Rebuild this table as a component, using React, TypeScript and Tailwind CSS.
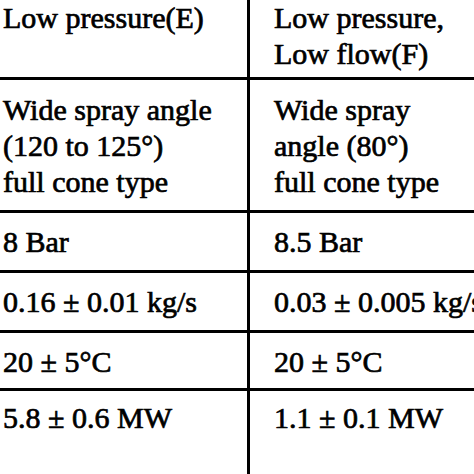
import React from "react"

type Row = {
  left: string[]
  right: string[]
  h: string
  pt: string
}

const rows: Row[] = [
  { left: ["Low pressure(E)"], right: ["Low pressure,", "Low flow(F)"], h: "h-[80px]", pt: "pt-0" },
  {
    left: ["Wide spray angle", "(120 to 125°)", "full cone type"],
    right: ["Wide spray", "angle (80°)", "full cone type"],
    h: "h-[133px]",
    pt: "pt-[12px]",
  },
  { left: ["8 Bar"], right: ["8.5 Bar"], h: "h-[60px]", pt: "pt-[11px]" },
  { left: ["0.16 ± 0.01 kg/s"], right: ["0.03 ± 0.005 kg/s"], h: "h-[60px]", pt: "pt-[11px]" },
  { left: ["20 ± 5°C"], right: ["20 ± 5°C"], h: "h-[58px]", pt: "pt-[11px]" },
]

export default function App() {
  return (
    <div
      className="flex h-[474px] w-[474px] flex-col overflow-hidden bg-white text-[30px] leading-[36px] text-black [-webkit-text-stroke:0.7px_black]"
      style={{ fontFamily: '"Liberation Serif", "Times New Roman", serif' }}
    >
      {rows.map((row, i) => (
        <div key={i} className={`flex shrink-0 border-b-[3px] border-black ${row.h}`}>
          <div className={`w-[247px] shrink-0 pl-[3px] ${row.pt}`}>
            {row.left.map((t, j) => (
              <div key={j} className="whitespace-nowrap">{t}</div>
            ))}
          </div>
          <div className={`flex-1 border-l-[3px] border-black pl-[24px] ${row.pt}`}>
            {row.right.map((t, j) => (
              <div key={j} className="whitespace-nowrap">{t}</div>
            ))}
          </div>
        </div>
      ))}
      <div className="flex flex-1">
        <div className="w-[247px] shrink-0 pl-[3px] pt-[9px] whitespace-nowrap">5.8 ± 0.6 MW</div>
        <div className="flex-1 border-l-[3px] border-black pl-[24px] pt-[9px] whitespace-nowrap">1.1 ± 0.1 MW</div>
      </div>
    </div>
  )
}
